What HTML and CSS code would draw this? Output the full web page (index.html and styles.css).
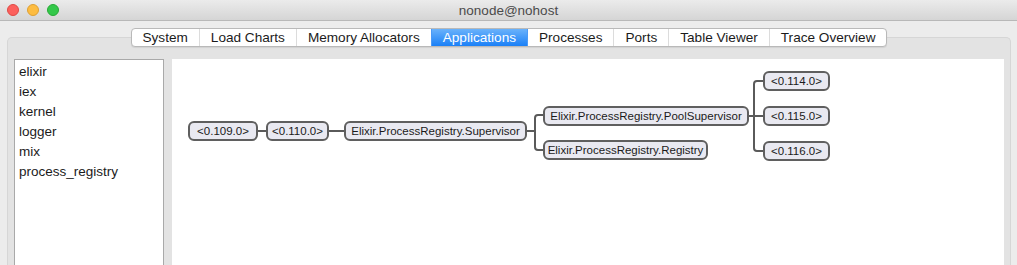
FILE: index.html
```html
<!DOCTYPE html>
<html>
<head>
<meta charset="utf-8">
<link rel="stylesheet" href="styles.css">
</head>
<body>
<div class="window">
  <div class="titlebar">
    <div class="lights">
      <span class="light red"></span>
      <span class="light yellow"></span>
      <span class="light green"></span>
    </div>
    <div class="title">nonode@nohost</div>
  </div>
  <div class="content">
    <div class="tabs">
      <div class="tab">System</div>
      <div class="tab">Load Charts</div>
      <div class="tab">Memory Allocators</div>
      <div class="tab active">Applications</div>
      <div class="tab">Processes</div>
      <div class="tab">Ports</div>
      <div class="tab">Table Viewer</div>
      <div class="tab">Trace Overview</div>
    </div>
    <div class="panel">
      <ul class="applist">
        <li>elixir</li>
        <li>iex</li>
        <li>kernel</li>
        <li>logger</li>
        <li>mix</li>
        <li>process_registry</li>
      </ul>
      <div class="graph">
        <svg class="links" width="832" height="220" viewBox="0 0 832 220">
          <g fill="none" stroke="#5a5a5a" stroke-width="2" stroke-linejoin="round">
            <path d="M85 72 H94"/>
            <path d="M157 72 H172"/>
            <path d="M355 72 H363"/>
            <path d="M371 56 H366 Q363 56 363 59 V88 Q363 91 366 91 H371"/>
            <path d="M577 57 H591"/>
            <path d="M591 22 H585 Q582 22 582 25 V89 Q582 92 585 92 H591"/>
          </g>
        </svg>
        <div class="node n109">&lt;0.109.0&gt;</div>
        <div class="node n110">&lt;0.110.0&gt;</div>
        <div class="node nsup">Elixir.ProcessRegistry.Supervisor</div>
        <div class="node npool">Elixir.ProcessRegistry.PoolSupervisor</div>
        <div class="node nreg">Elixir.ProcessRegistry.Registry</div>
        <div class="node n114">&lt;0.114.0&gt;</div>
        <div class="node n115">&lt;0.115.0&gt;</div>
        <div class="node n116">&lt;0.116.0&gt;</div>
      </div>
    </div>
  </div>
</div>
</body>
</html>
```

FILE: styles.css
```css
* { box-sizing: border-box; }
html, body {
  margin: 0;
  padding: 0;
  width: 1017px;
  height: 265px;
  overflow: hidden;
  background: #ececec;
  font-family: "Liberation Sans", Arial, sans-serif;
  color: #1b1b1b;
}
.window {
  width: 1017px;
  height: 265px;
  display: flex;
  flex-direction: column;
}
.titlebar {
  height: 21px;
  flex: none;
  background: linear-gradient(#ebebeb, #d5d5d5);
  border-bottom: 1px solid #b8b8b8;
  display: flex;
  align-items: center;
  position: relative;
}
.lights {
  display: flex;
  gap: 8px;
  padding-left: 7px;
  position: relative;
  z-index: 1;
}
.light {
  width: 12px;
  height: 12px;
  border-radius: 50%;
  display: block;
}
.red { background: #fc605c; border: 1px solid #de4a45; }
.yellow { background: #fdbc40; border: 1px solid #dea033; }
.green { background: #34c84a; border: 1px solid #27aa35; }
.title {
  position: absolute;
  left: 0;
  right: 0;
  top: 0;
  bottom: 0;
  display: flex;
  align-items: center;
  justify-content: center;
  font-size: 13.5px;
  color: #4b4b4b;
}
.content {
  flex: 1;
  display: flex;
  flex-direction: column;
  padding: 0 6px 0 7px;
  min-height: 0;
}
.tabs {
  align-self: center;
  margin-top: 7px;
  height: 19px;
  display: flex;
  background: #fff;
  border: 1px solid #b9b9b9;
  border-radius: 4px;
  box-shadow: 0 1px 1px rgba(0,0,0,0.08);
  position: relative;
  z-index: 2;
  overflow: hidden;
}
.tab {
  font-size: 13.6px;
  line-height: 17px;
  padding: 0 11px;
  border-left: 1px solid #dcdcdc;
  white-space: nowrap;
  color: #1b1b1b;
}
.tab:first-child { border-left: none; }
.tab.active {
  background: linear-gradient(#6ab2fb, #1a80f7);
  color: #fff;
  border-left-color: #4a9af8;
}
.tab.active + .tab { border-left-color: #4a9af8; }
.panel {
  margin-top: -10px;
  flex: 1;
  background: #e3e3e3;
  border: 1px solid #d6d6d6;
  border-bottom: none;
  border-radius: 5px 5px 0 0;
  padding: 21px 6px 0 6px;
  display: flex;
  gap: 8px;
  min-height: 0;
}
.applist {
  list-style: none;
  margin: 0;
  width: 150px;
  flex: none;
  background: #fff;
  border: 1px solid #a9a9a9;
  border-bottom: none;
  padding: 2px 0 0 4px;
  font-size: 13.5px;
  line-height: 20px;
}
.graph {
  flex: 1;
  background: #fff;
  position: relative;
}
.links {
  position: absolute;
  left: 0;
  top: 0;
}
.node {
  position: absolute;
  height: 20px;
  border: 2px solid #5f5f5f;
  border-radius: 6px;
  background: #e9e9f1;
  font-size: 11.5px;
  line-height: 17px;
  text-align: center;
  white-space: nowrap;
  color: #1b1b1b;
}
.n109 { left: 16px; top: 62px; width: 70px; }
.n110 { left: 94px; top: 62px; width: 63px; }
.nsup { left: 172px; top: 62px; width: 183px; }
.npool { left: 371px; top: 47px; width: 206px; }
.nreg { left: 371px; top: 81px; width: 165px; }
.n114 { left: 591px; top: 12px; width: 67px; }
.n115 { left: 591px; top: 47px; width: 67px; }
.n116 { left: 591px; top: 82px; width: 67px; }
```
